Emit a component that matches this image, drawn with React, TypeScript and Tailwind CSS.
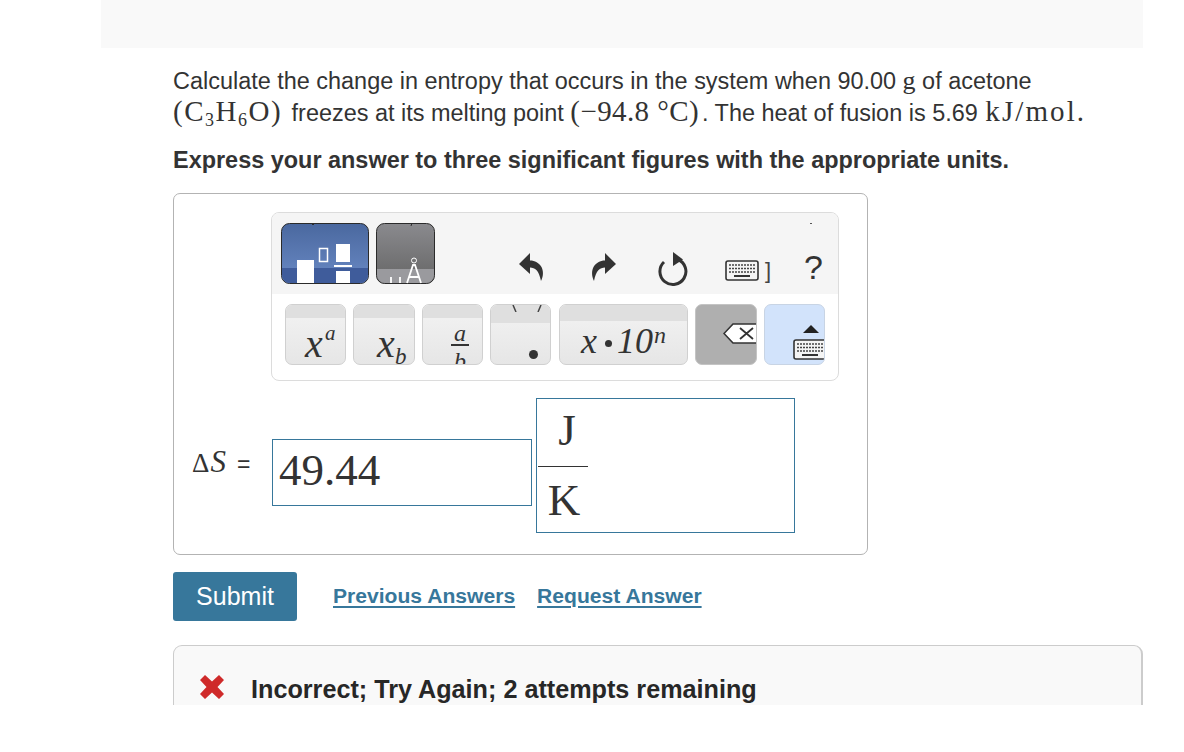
import type { ReactNode } from 'react'

const serif = "font-['Liberation_Serif',serif]"

function Key({ className, band = true, children }: { className: string; band?: boolean; children: ReactNode }) {
  return (
    <div className={`h-[61px] shrink-0 overflow-hidden rounded-[7px] border border-[#d0d0d0] bg-gradient-to-b from-[#f3f3f3] to-[#e6e6e6] ${className}`}>
      {band && <div className="h-[13px] bg-[#dfdfdf]" />}
      {children}
    </div>
  )
}

function KeyboardIcon({ className }: { className: string }) {
  return (
    <svg viewBox="0 0 34 21" className={className} fill="none">
      <rect x="1" y="1" width="32" height="19" rx="2" stroke="#333" strokeWidth="1.6" fill="#f4f4f4" />
      <path d="M4 5h26M4 8.500h26M4 12h26" stroke="#444" strokeWidth="1.6" strokeDasharray="2 1" />
      <path d="M9 16h16" stroke="#333" strokeWidth="2" />
    </svg>
  )
}

function ArrowIcon({ flip }: { flip?: boolean }) {
  return (
    <svg viewBox="0 0 24 28" className={`h-[28px] w-[24px] ${flip ? '-scale-x-100' : ''}`}>
      <path
        d="M11 0 0 11l11 10v-6.500c5 0 9 3 11 13.500 2.500-5 2.500-10 .5-14C20 10 16 7.500 11 7.500Z"
        fill="#333"
      />
    </svg>
  )
}

export default function App() {
  return (
    <div className="h-[752px] w-[1184px] overflow-hidden bg-white font-['Liberation_Sans',sans-serif] text-[#333]">
      <div className="ml-[101px] h-[705px] w-[1042px] overflow-hidden">
        <div className="h-[48px] bg-[#f9f9f9]" />

        <div className="px-[72px] pt-[18px]">
          <p className="h-[30px] whitespace-nowrap text-[23.450px] leading-[30px]">
            Calculate the change in entropy that occurs in the system when 90.00 <span className={`${serif} text-[26px]`}>g</span> of acetone
          </p>
          <p className="h-[30px] whitespace-nowrap text-[23.450px] leading-[30px]">
            <span className={`${serif} text-[29px] tracking-[1.500px]`}>
              (C<sub className="text-[18px] leading-none">3</sub>H<sub className="text-[18px] leading-none">6</sub>O)
            </span>
            <span className="ml-[3px]"> freezes at its melting point </span>
            <span className={`${serif} text-[29px] tracking-[0.400px]`}>(−94.8 °C)</span>
            <span className="ml-[3px]">. The heat of fusion is 5.69 </span>
            <span className={`${serif} ml-[1px] text-[29px] tracking-[2.100px]`}>kJ/mol.</span>
          </p>
          <p className="mt-[19px] h-[30px] whitespace-nowrap text-[23.450px] font-bold leading-[30px]">
            Express your answer to three significant figures with the appropriate units.
          </p>

          <div className="mt-[18px] h-[362px] w-[695px] rounded-[7px] border border-[#b3b3b3] pl-[97px] pt-[18px]">
            <div className="h-[169px] w-[568px] overflow-hidden rounded-[8px] border border-[#dcdcdc]">
              <div className="flex h-[81px] items-start bg-[#f5f5f5] pl-[9px] pt-[10px]">
                <svg viewBox="0 0 88 61" className="h-[61px] w-[88px] shrink-0">
                  <defs>
                    <linearGradient id="blue" x1="0" y1="0" x2="0" y2="1">
                      <stop offset="0" stopColor="#4a689f" />
                      <stop offset="1" stopColor="#6a8ac5" />
                    </linearGradient>
                  </defs>
                  <rect x="0.500" y="0.500" width="87" height="60" rx="8" fill="url(#blue)" stroke="#2b2b2b" />
                  <path d="M1 45h86v7a8 8 0 0 1-8 8H9a8 8 0 0 1-8-8Z" fill="#3f5c9b" />
                  <rect x="16" y="37" width="17" height="23" fill="#fff" />
                  <rect x="38.500" y="25.500" width="8" height="13" fill="none" stroke="#fff" strokeWidth="1.500" />
                  <rect x="55" y="21" width="14" height="18" fill="#fff" />
                  <rect x="53" y="42" width="18" height="2" fill="#fff" />
                  <rect x="55" y="48" width="14" height="12" fill="#fff" />
                  <rect x="31" y="0" width="2" height="2" fill="#2b2b2b" />
                </svg>
                <svg viewBox="0 0 59 61" className="ml-[7px] h-[61px] w-[59px] shrink-0">
                  <defs>
                    <linearGradient id="gray" x1="0" y1="0" x2="0" y2="1">
                      <stop offset="0" stopColor="#8a8a8e" />
                      <stop offset="1" stopColor="#656565" />
                    </linearGradient>
                  </defs>
                  <rect x="0.500" y="0.500" width="58" height="60" rx="8" fill="url(#gray)" stroke="#2b2b2b" />
                  <path d="M1 46h57v6a8 8 0 0 1-8 8H9a8 8 0 0 1-8-8Z" fill="#9a9a9e" />
                  <circle cx="38" cy="37.500" r="2.500" fill="none" stroke="#fff" />
                  <path d="M31 60 37 42h2l6 18M33 54h10M15 54v6M24 54v6" fill="none" stroke="#fff" strokeWidth="1.800" />
                  <path d="M36 0l-1 3" stroke="#2b2b2b" />
                </svg>

                <div className="ml-[84px] mt-[30px]"><ArrowIcon /></div>
                <div className="ml-[49px] mt-[30px]"><ArrowIcon flip /></div>
                <svg viewBox="0 0 32 34" className="ml-[41px] mt-[29px] h-[34px] w-[32px]">
                  <path d="M21 7.500A13 13 0 1 1 7 10" fill="none" stroke="#333" strokeWidth="3" />
                  <path d="M16 0l10 7.500-10 6.500Z" fill="#333" />
                </svg>
                <KeyboardIcon className="ml-[36px] mt-[37px] h-[21px] w-[34px]" />
                <span className="ml-[6px] mt-[35px] w-[8px] text-[22px] leading-[26px] text-[#444]">]</span>
                <div className="ml-[31px] flex flex-col">
                  <span className="ml-[6px] h-[1px] w-[2px] bg-[#555]" />
                  <span className="mt-[25px] text-[34px] leading-[36px]">?</span>
                </div>
              </div>

              <div className="flex gap-[7px] pl-[13px] pt-[10px]">
                <Key className="w-[61px]">
                  <div className={`${serif} relative pl-[19px] pt-[6px] text-[40px] italic leading-[40px]`}>
                    x<sup className="absolute left-[39px] top-[5px] text-[21px] leading-none">a</sup>
                  </div>
                </Key>
                <Key className="w-[62px]">
                  <div className={`${serif} relative pl-[23px] pt-[6px] text-[40px] italic leading-[40px]`}>
                    x<sub className="absolute left-[41px] top-[27px] text-[23px] leading-none">b</sub>
                  </div>
                </Key>
                <Key className="w-[61px]">
                  <div className={`${serif} flex flex-col items-center pl-[15px] text-[24px] italic leading-[24px]`}>
                    <span className="mt-[3px] h-[23px]">a</span>
                    <span className="h-[2px] w-[18px] shrink-0 bg-[#333]" />
                    <span className="mt-[3px]">b</span>
                  </div>
                </Key>
                <Key className="w-[61px]" band={false}>
                  <div className="h-[18px] bg-[#dfdfdf] pl-[21px]">
                    <svg viewBox="0 0 30 7" className="h-[7px] w-[30px]">
                      <path d="M1 0l3 7M29 0l-3 7" stroke="#444" strokeWidth="1.500" />
                    </svg>
                  </div>
                  <div className="ml-[38px] mt-[27px] h-[9px] w-[9px] rounded-full bg-[#333]" />
                </Key>
                <Key className="ml-[1px] w-[129px]" band={false}>
                  <div className="h-[16px] bg-[#dfdfdf]" />
                  <div className={`${serif} relative flex items-center whitespace-nowrap pl-[21px] pt-[2px] text-[36px] italic leading-[36px]`}>
                    x<span className="ml-[8px] mr-[5px] mt-[4px] h-[7px] w-[7px] rounded-full bg-[#333]" />10
                    <sup className="top-[-6px] ml-[1px] text-[24px] leading-none">n</sup>
                  </div>
                </Key>
                <div className="h-[61px] w-[62px] shrink-0 overflow-hidden rounded-[7px] border border-[#c4c4c4] bg-[#afafaf] pl-[27px] pt-[18px]">
                  <svg viewBox="0 0 34 21" className="h-[21px] w-[34px]">
                    <path d="M34 1H10L1 10.500 10 20h24Z" fill="#fff" />
                    <path d="M34 1H10L1 10.500 10 20h24" fill="none" stroke="#333" strokeWidth="1.600" />
                    <path d="M17 5l13 11M30 5 17 16" stroke="#333" strokeWidth="1.800" />
                  </svg>
                </div>
                <div className="h-[61px] w-[61px] shrink-0 overflow-hidden rounded-[7px] border border-[#c8d4e4] bg-[#d2e3fb] pl-[28px] pt-[20px]">
                  <svg viewBox="0 0 16 8" className="ml-[10px] h-[8px] w-[16px]"><path d="M8 0l8 8H0Z" fill="#222" /></svg>
                  <KeyboardIcon className="mt-[6px] h-[21px] w-[34px]" />
                </div>
              </div>
            </div>

            <div className="mt-[17px] flex items-start">
              <div className={`${serif} -ml-[79px] mt-[47px] w-[79px] whitespace-nowrap text-[27px] leading-[34px]`}>
                Δ<i className="ml-[1px] text-[31px]">S</i><span className="ml-[11px] font-['Liberation_Sans',sans-serif] text-[23px]">=</span>
              </div>
              <div className={`${serif} ml-[1px] mt-[41px] h-[67px] w-[260px] border border-[#37779b] pl-[6px] pt-[7px] text-[45px] leading-[46px]`}>
                49.44
              </div>
              <div className={`${serif} ml-[4px] h-[135px] w-[259px] border border-[#37779b] text-[45px] leading-[44px]`}>
                <div className="w-[60px] pt-[9px] text-center">J</div>
                <div className="ml-[1px] mt-[14px] h-px w-[50px] bg-[#333]" />
                <div className="w-[54px] pt-[11px] text-center">K</div>
              </div>
            </div>
          </div>

          <div className="mt-[17px] flex items-center">
            <div className="flex h-[49px] w-[124px] items-center justify-center rounded-[3px] bg-[#37779b] text-[25px] text-white">Submit</div>
            <span className="ml-[36px] pb-[2px] text-[21.100px] font-bold text-[#37779b] underline underline-offset-[3px]">Previous Answers</span>
            <span className="ml-[22px] pb-[2px] text-[21.100px] font-bold text-[#37779b] underline underline-offset-[3px]">Request Answer</span>
          </div>

          <div className="mt-[24px] flex h-[90px] w-[970px] items-start rounded-[9px] border border-r-2 border-[#cccccc] bg-[#f9f9f9] pl-[26px] pt-[29px]">
            <svg viewBox="0 0 24 24" className="h-[24px] w-[24px]">
              <path d="M0 5l5-5 7 6.500L19 0l5 5-6.500 7L24 19l-5 5-7-6.500L5 24l-5-5 6.500-7Z" fill="#cf2a2a" />
            </svg>
            <span className="ml-[27px] text-[25.200px] font-bold leading-[28px] text-[#272727]">Incorrect; Try Again; 2 attempts remaining</span>
          </div>
        </div>
      </div>
    </div>
  )
}
